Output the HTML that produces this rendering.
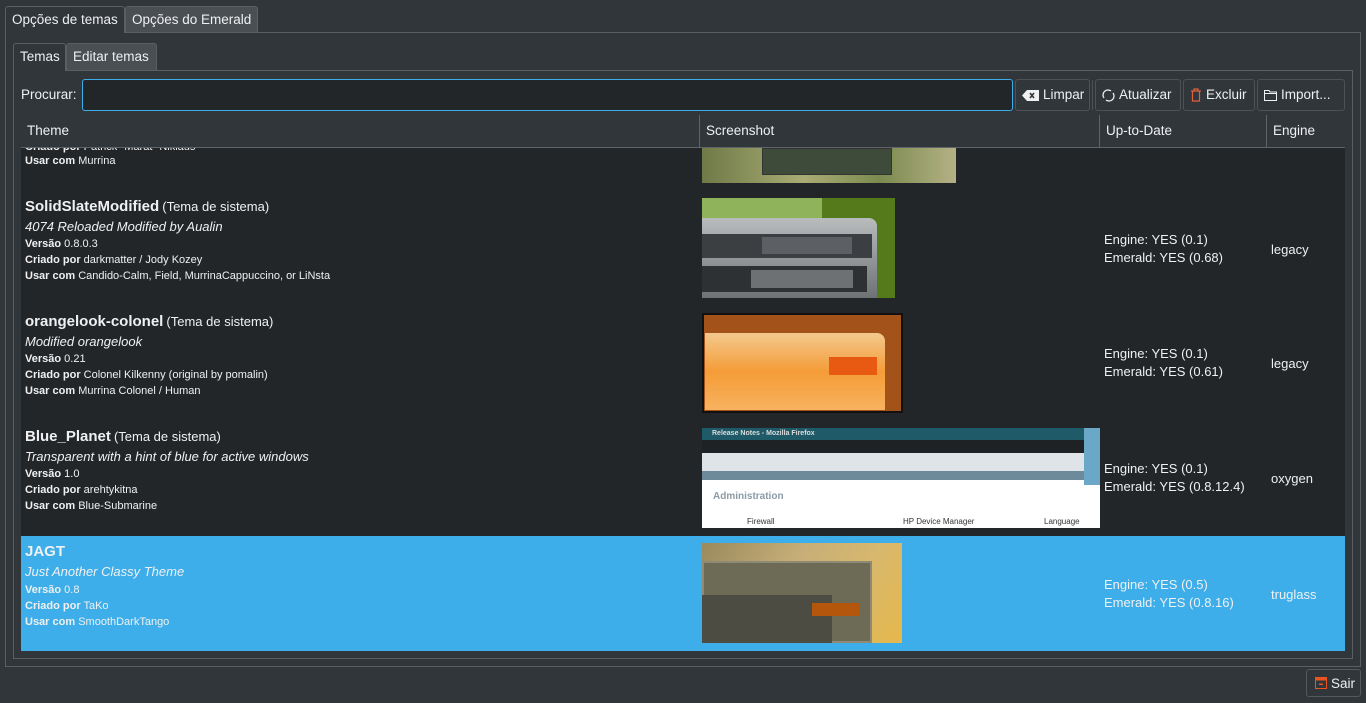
<!DOCTYPE html>
<html><head><meta charset="utf-8"><style>
*{box-sizing:border-box;margin:0;padding:0}
body{width:1366px;height:703px;background:#31363b;font-family:"Liberation Sans","DejaVu Sans",sans-serif;color:#eff0f1;font-size:13px;position:relative;overflow:hidden}
.a{position:absolute}
.tab{position:absolute;border:1px solid #5a5f64;border-bottom:none;border-radius:3px 3px 0 0;padding:0 6px;line-height:26px;font-size:13.5px;white-space:nowrap}
.btn{position:absolute;top:79px;height:32px;border:1px solid #4d5256;border-radius:3px;line-height:30px;font-size:13.5px;padding-left:6px;display:flex;align-items:center;gap:4px;white-space:nowrap}
.hdr{position:absolute;top:115px;height:33px;line-height:32px;padding-left:6px;font-size:13.5px;border-bottom:1px solid #5f6469}
.row{position:absolute;left:21px;width:1324px}
.t{position:absolute;left:4px;font-size:11px;line-height:16px;white-space:nowrap}
.t b.n{font-size:15px}
.t .tn{font-size:13px}
.t i{font-size:13px}
.ud{position:absolute;left:1083px;font-size:13px;line-height:18px}
.en{position:absolute;left:1250px;font-size:13px}
</style></head><body>
<div class="tab" style="left:5px;top:6px;width:120px;height:27px;background:#31363b;z-index:2">Opções de temas</div>
<div class="tab" style="left:125px;top:6px;width:133px;height:26px;background:#4a4f54">Opções do Emerald</div>
<div class="a" style="left:5px;top:32px;width:1356px;height:635px;border:1px solid #5a5f64"></div>
<div class="tab" style="left:13px;top:43px;width:53px;height:28px;background:#31363b;z-index:2">Temas</div>
<div class="tab" style="left:66px;top:43px;width:91px;height:27px;background:#4a4f54">Editar temas</div>
<div class="a" style="left:13px;top:70px;width:1340px;height:589px;border:1px solid #5a5f64"></div>
<div class="a" style="left:21px;top:87px;font-size:13.5px">Procurar:</div>
<div class="a" style="left:82px;top:79px;width:931px;height:32px;background:#232629;border:1px solid #3daee9;border-radius:3px"></div>
<div class="btn" style="left:1015px;width:75px"><svg width="17" height="11"><path d="M5 0H17V11H5L0 5.5Z" fill="#eff0f1"/><path d="M8 3L12 8M12 3L8 8" stroke="#31363b" stroke-width="1.6"/></svg>Limpar</div>
<div class="a" style="left:1092px;top:80px;width:1px;height:30px;background:#4d5256"></div>
<div class="btn" style="left:1095px;width:86px"><svg width="13" height="13"><path d="M2 9A5 5 0 0 1 9 2M11 4A5 5 0 0 1 4 11" stroke="#eff0f1" fill="none" stroke-width="1.3"/></svg>Atualizar</div>
<div class="btn" style="left:1183px;width:72px"><svg width="12" height="14"><path d="M1 3H11M4 3V1H8V3M2.5 3V13H9.5V3" stroke="#e3603a" fill="none" stroke-width="1.2"/></svg>Excluir</div>
<div class="btn" style="left:1257px;width:88px"><svg width="13" height="12"><path d="M.5 1.5H5L6 3H12.5V11.5H.5ZM.5 4.5H12.5" stroke="#eff0f1" fill="none"/></svg>Import...</div>
<div class="a" style="left:21px;top:115px;width:1324px;height:536px;background:#232629"></div>
<div class="hdr" style="left:21px;width:679px;background:#31363b;border-right:1px solid #5f6469">Theme</div>
<div class="hdr" style="left:700px;width:400px;background:#31363b;border-right:1px solid #5f6469">Screenshot</div>
<div class="hdr" style="left:1100px;width:167px;background:#31363b;border-right:1px solid #5f6469">Up-to-Date</div>
<div class="hdr" style="left:1267px;width:78px;background:#31363b">Engine</div>
<div class="row" style="top:148px;height:40px;overflow:hidden">
 <div class="t" style="top:-9px"><b>Criado por</b> Patrick "Marat" Niklaus</div>
 <div class="t" style="top:5px"><b>Usar com</b> Murrina</div>
 <div class="a" style="left:681px;top:0;width:254px;height:35px;background:linear-gradient(90deg,#6f7a48,#a9ac74 40%,#7c8a4f 70%,#b4b185)"></div>
 <div class="a" style="left:741px;top:0;width:130px;height:27px;border:1px solid #333;background:#3e4a3a"></div>
</div>
<div class="row" style="top:190px;height:115px">
 <div class="t" style="top:9px"><b class="n">SolidSlateModified</b> <span class="tn">(Tema de sistema)</span></div>
 <div class="t" style="top:29px"><i>4074 Reloaded Modified by Aualin</i></div>
 <div class="t" style="top:46px"><b>Versão</b> 0.8.0.3</div>
 <div class="t" style="top:62px"><b>Criado por</b> darkmatter / Jody Kozey</div>
 <div class="t" style="top:78px"><b>Usar com</b> Candido-Calm, Field, MurrinaCappuccino, or LiNsta</div>
 <div class="a" style="left:681px;top:8px;width:193px;height:100px;background:#557a1c"></div>
 <div class="a" style="left:681px;top:8px;width:120px;height:30px;background:#8fb35a"></div>
 <div class="a" style="left:681px;top:28px;width:175px;height:80px;background:linear-gradient(#b9bcbd,#6e7275);border-radius:0 8px 0 0"></div>
 <div class="a" style="left:681px;top:44px;width:170px;height:24px;background:#3b3f42"></div>
 <div class="a" style="left:681px;top:76px;width:165px;height:26px;background:#2e3134"></div>
 <div class="a" style="left:741px;top:47px;width:90px;height:17px;background:#5c6064"></div>
 <div class="a" style="left:730px;top:80px;width:102px;height:18px;background:#6d7174"></div>
</div>
<div class="row" style="top:305px;height:115px">
 <div class="t" style="top:9px"><b class="n">orangelook-colonel</b> <span class="tn">(Tema de sistema)</span></div>
 <div class="t" style="top:29px"><i>Modified orangelook</i></div>
 <div class="t" style="top:46px"><b>Versão</b> 0.21</div>
 <div class="t" style="top:62px"><b>Criado por</b> Colonel Kilkenny (original by pomalin)</div>
 <div class="t" style="top:78px"><b>Usar com</b> Murrina Colonel / Human</div>
 <div class="a" style="left:681px;top:8px;width:201px;height:100px;background:#a3521a;border:2px solid #111"></div>
 <div class="a" style="left:684px;top:28px;width:180px;height:77px;background:linear-gradient(#f3c98e,#f59c38 50%,#f7b25f);border-radius:0 8px 0 0"></div>
 <div class="a" style="left:808px;top:52px;width:48px;height:18px;background:#e85a12"></div>
 <div class="ud" style="top:40px">Engine: YES (0.1)<br>Emerald: YES (0.61)</div>
 <div class="en" style="top:51px">legacy</div>
</div>
<div class="a" style="left:1104px;top:231px;font-size:13px;line-height:18px">Engine: YES (0.1)<br>Emerald: YES (0.68)</div>
<div class="a" style="left:1271px;top:242px;font-size:13px">legacy</div>
<div class="row" style="top:420px;height:115px">
 <div class="t" style="top:9px"><b class="n">Blue_Planet</b> <span class="tn">(Tema de sistema)</span></div>
 <div class="t" style="top:29px"><i>Transparent with a hint of blue for active windows</i></div>
 <div class="t" style="top:46px"><b>Versão</b> 1.0</div>
 <div class="t" style="top:62px"><b>Criado por</b> arehtykitna</div>
 <div class="t" style="top:78px"><b>Usar com</b> Blue-Submarine</div>
 <div class="a" style="left:681px;top:8px;width:398px;height:100px;background:#fff"></div>
 <div class="a" style="left:681px;top:8px;width:398px;height:12px;background:#1f5a68;color:#ddd;font-size:7px;font-weight:bold;padding-left:10px;line-height:12px">Release Notes - Mozilla Firefox</div>
 <div class="a" style="left:681px;top:20px;width:398px;height:13px;background:#1f2225"></div>
 <div class="a" style="left:681px;top:33px;width:398px;height:18px;background:#dfe4e8"></div>
 <div class="a" style="left:681px;top:51px;width:398px;height:9px;background:#6d8a9b"></div>
 <div class="a" style="left:1063px;top:8px;width:16px;height:57px;background:#6ba8c8"></div>
 <div class="a" style="left:692px;top:71px;font-size:10px;font-weight:bold;color:#8c9aa5">Administration</div>
 <div class="a" style="left:726px;top:97px;font-size:8px;color:#333">Firewall</div>
 <div class="a" style="left:882px;top:97px;font-size:8px;color:#333">HP Device Manager</div>
 <div class="a" style="left:1023px;top:97px;font-size:8px;color:#333">Language</div>
 <div class="ud" style="top:40px">Engine: YES (0.1)<br>Emerald: YES (0.8.12.4)</div>
 <div class="en" style="top:51px">oxygen</div>
</div>
<div class="row" style="top:536px;height:115px;background:#3daee9">
 <div class="t" style="top:8px"><b class="n">JAGT</b></div>
 <div class="t" style="top:28px"><i>Just Another Classy Theme</i></div>
 <div class="t" style="top:46px"><b>Versão</b> 0.8</div>
 <div class="t" style="top:62px"><b>Criado por</b> TaKo</div>
 <div class="t" style="top:78px"><b>Usar com</b> SmoothDarkTango</div>
 <div class="a" style="left:681px;top:7px;width:200px;height:100px;background:linear-gradient(120deg,#9a8a5c,#c6ae78 40%,#d8b86e 70%,#e6b84a)"></div>
 <div class="a" style="left:681px;top:25px;width:170px;height:82px;background:#6d6a55;border:2px solid #8e8a73"></div>
 <div class="a" style="left:681px;top:59px;width:130px;height:48px;background:#4d4c42"></div>
 <div class="a" style="left:791px;top:67px;width:48px;height:13px;background:#b5560d"></div>
 <div class="ud" style="top:40px">Engine: YES (0.5)<br>Emerald: YES (0.8.16)</div>
 <div class="en" style="top:51px">truglass</div>
</div>
<div class="a" style="left:1306px;top:669px;width:55px;height:28px;border:1px solid #55595e;border-radius:3px;display:flex;align-items:center;gap:4px;padding-left:8px;font-size:13.5px"><svg width="12" height="12"><rect x=".5" y=".5" width="11" height="11" fill="none" stroke="#e95420"/><rect x=".5" y=".5" width="11" height="3" fill="#e95420"/><rect x="4" y="6.5" width="4" height="1.5" fill="#e95420"/></svg>Sair</div>
</body></html>
